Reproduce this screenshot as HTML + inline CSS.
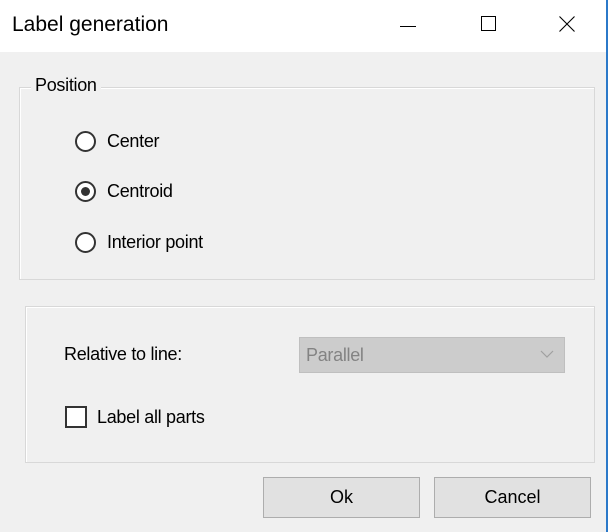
<!DOCTYPE html>
<html><head><style>
*{margin:0;padding:0;box-sizing:border-box}
body{width:608px;height:532px;background:#f0f0f0;font-family:"Liberation Sans",sans-serif;position:relative;overflow:hidden;color:#000}
.t{position:absolute;white-space:nowrap;font-size:18px;letter-spacing:-0.3px}
#title{position:absolute;left:0;top:0;width:608px;height:52px;background:#fff}
.rb{position:absolute;border-right:2px solid #2b79c9;right:0;top:0;height:532px;width:2px}
.box{position:absolute;border:1px solid #d8d8d8;box-shadow:inset 1px 1px 0 #fff}
.radio{position:absolute;width:21px;height:21px;border:2px solid #333;border-radius:50%;background:#fff}
.btn{position:absolute;height:41px;background:#e1e1e1;border:1px solid #adadad;text-align:center;line-height:39px;font-size:18px}
</style></head><body>
<div id="title"></div>
<div class="t" style="left:12px;top:13px;font-size:21px;letter-spacing:0">Label generation</div>
<div style="position:absolute;left:400px;top:26px;width:16px;height:1px;background:#000"></div>
<div style="position:absolute;left:481px;top:16px;width:15px;height:15px;border:1px solid #000"></div>
<svg style="position:absolute;left:559px;top:16px" width="16" height="16"><path d="M0.5 0.5L15.5 15.5M15.5 0.5L0.5 15.5" stroke="#000" stroke-width="1.1"/></svg>
<div class="rb"></div>
<div class="box" style="left:19px;top:87px;width:576px;height:193px"></div>
<div class="t" style="left:31px;top:75px;background:#f0f0f0;padding:0 4px">Position</div>
<div class="radio" style="left:75px;top:131px"></div>
<div class="t" style="left:107px;top:131px">Center</div>
<div class="radio" style="left:75px;top:181px"><div style="position:absolute;left:4px;top:4px;width:9px;height:9px;border-radius:50%;background:#333"></div></div>
<div class="t" style="left:107px;top:181px">Centroid</div>
<div class="radio" style="left:75px;top:232px"></div>
<div class="t" style="left:107px;top:232px">Interior point</div>
<div class="box" style="left:25px;top:306px;width:570px;height:157px"></div>
<div class="t" style="left:64px;top:344px">Relative to line:</div>
<div style="position:absolute;left:299px;top:337px;width:266px;height:36px;background:#cccccc;border:1px solid #bfbfbf"></div>
<div class="t" style="left:306px;top:345px;color:#838383">Parallel</div>
<svg style="position:absolute;left:540px;top:350px" width="14" height="8"><path d="M1 1L7 7L13 1" stroke="#a0a0a0" fill="none" stroke-width="1.2"/></svg>
<div style="position:absolute;left:65px;top:406px;width:22px;height:22px;border:2px solid #333;background:#fff"></div>
<div class="t" style="left:97px;top:407px">Label all parts</div>
<div class="btn" style="left:263px;top:477px;width:157px">Ok</div>
<div class="btn" style="left:434px;top:477px;width:157px">Cancel</div>
</body></html>
